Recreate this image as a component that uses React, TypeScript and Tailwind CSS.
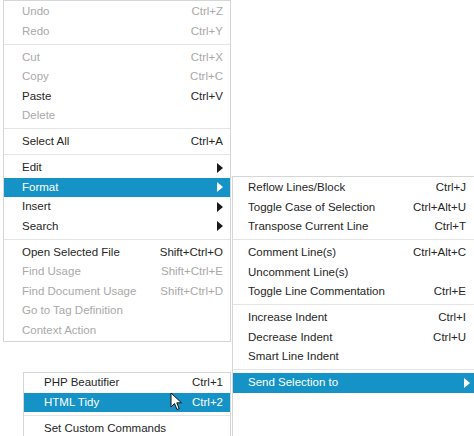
type Item =
  | { sep: true }
  | {
      sep?: false;
      label: string;
      keys?: string;
      off?: boolean;
      on?: boolean;
      sub?: boolean;
    };

const mainItems: Item[] = [
  { label: "Undo", keys: "Ctrl+Z", off: true },
  { label: "Redo", keys: "Ctrl+Y", off: true },
  { sep: true },
  { label: "Cut", keys: "Ctrl+X", off: true },
  { label: "Copy", keys: "Ctrl+C", off: true },
  { label: "Paste", keys: "Ctrl+V" },
  { label: "Delete", off: true },
  { sep: true },
  { label: "Select All", keys: "Ctrl+A" },
  { sep: true },
  { label: "Edit", sub: true },
  { label: "Format", sub: true, on: true },
  { label: "Insert", sub: true },
  { label: "Search", sub: true },
  { sep: true },
  { label: "Open Selected File", keys: "Shift+Ctrl+O" },
  { label: "Find Usage", keys: "Shift+Ctrl+E", off: true },
  { label: "Find Document Usage", keys: "Shift+Ctrl+D", off: true },
  { label: "Go to Tag Definition", off: true },
  { label: "Context Action", off: true },
];

const formatItems: Item[] = [
  { label: "Reflow Lines/Block", keys: "Ctrl+J" },
  { label: "Toggle Case of Selection", keys: "Ctrl+Alt+U" },
  { label: "Transpose Current Line", keys: "Ctrl+T" },
  { sep: true },
  { label: "Comment Line(s)", keys: "Ctrl+Alt+C" },
  { label: "Uncomment Line(s)" },
  { label: "Toggle Line Commentation", keys: "Ctrl+E" },
  { sep: true },
  { label: "Increase Indent", keys: "Ctrl+I" },
  { label: "Decrease Indent", keys: "Ctrl+U" },
  { label: "Smart Line Indent" },
  { sep: true },
  { label: "Send Selection to", sub: true, on: true },
];

const sendItems: Item[] = [
  { label: "PHP Beautifier", keys: "Ctrl+1" },
  { label: "HTML Tidy", keys: "Ctrl+2", on: true },
  { sep: true },
  { label: "Set Custom Commands" },
];

const Arrow = ({ on, cls }: { on?: boolean; cls: string }) => (
  <svg width="6" height="10" viewBox="0 0 6 10" className={`shrink-0 ${cls}`}>
    <path d="M0 0 L6 5 L0 10 Z" fill={on ? "#ffffff" : "#1a1a1a"} />
  </svg>
);

const Menu = ({
  items,
  padL,
  padR,
  arrowCls = "",
}: {
  items: Item[];
  padL: string;
  padR: string;
  arrowCls?: string;
}) => (
  <div className="flex flex-col">
    {items.map((it, i) =>
      it.sep ? (
        <div key={i} className="h-[6.5px] flex items-center">
          <div className="h-px w-full bg-[#e4e4e4]" />
        </div>
      ) : (
        <div
          key={i}
          className={`h-[19.5px] flex items-center justify-between ${padL} ${padR} ${
            it.on
              ? "bg-[#1593c6] text-white"
              : it.off
              ? "text-[#a9a9a9]"
              : "text-[#262626]"
          }`}
        >
          <span>{it.label}</span>
          {it.sub ? (
            <Arrow on={it.on} cls={arrowCls} />
          ) : it.keys ? (
            <span>{it.keys}</span>
          ) : null}
        </div>
      )
    )}
  </div>
);

const Cursor = () => (
  <svg
    width="13"
    height="19"
    viewBox="0 0 13 19"
    className="absolute left-[170px] top-[392px]"
  >
    <path
      d="M1 1 L1 15 L4.5 11.5 L7 17.5 L9.2 16.6 L6.8 10.8 L11.5 10.8 Z"
      fill="#ffffff"
      stroke="#111111"
      strokeWidth="1"
      strokeLinejoin="round"
    />
  </svg>
);

export default function App() {
  return (
    <div className="relative w-[474px] h-[436px] overflow-hidden bg-white font-['Liberation_Sans',sans-serif] text-[11.5px] leading-none">
      <div className="absolute left-[3px] top-0 w-[228px] bg-white border border-[#d6d6d6] py-px">
        <Menu items={mainItems} padL="pl-[18px]" padR="pr-[7px]" />
      </div>

      <div className="absolute left-[232px] top-[176px] w-[260px] h-[300px] bg-white border border-[#d6d6d6] py-px">
        <Menu
          items={formatItems}
          padL="pl-[15px]"
          padR="pr-[25px]"
          arrowCls="mr-[-4px]"
        />
      </div>

      <div className="absolute left-[23px] top-[372px] w-[208px] h-[80px] bg-white border border-[#d6d6d6]">
        <Menu items={sendItems} padL="pl-[20px]" padR="pr-[7px]" />
      </div>

      <Cursor />
    </div>
  );
}
